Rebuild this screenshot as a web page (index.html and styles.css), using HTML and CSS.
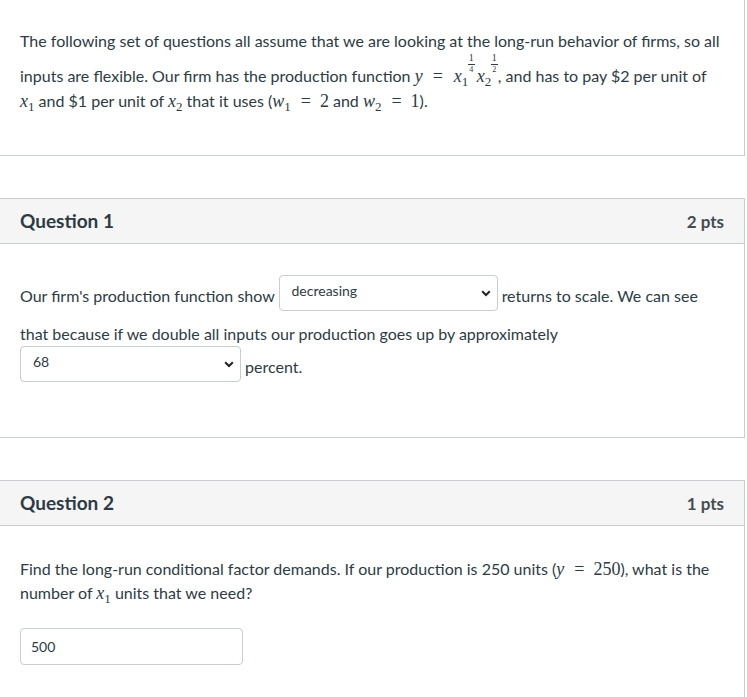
FILE: index.html
```html
<!DOCTYPE html>
<html>
<head>
<meta charset="utf-8">
<link rel="stylesheet" href="styles.css">
</head>
<body>
<div class="card intro">
  <p class="txt">The following set of questions all assume that we are looking at the long-run behavior of firms, so all inputs are flexible. Our firm has the production function <span class="m"><i>y</i><span class="eq">=</span><span class="xv"><i>x</i><span class="ss"><span class="fr"><span class="nu">1</span><span class="de">4</span></span><span class="sb">1</span></span></span><span class="xv"><i>x</i><span class="ss"><span class="fr"><span class="nu">1</span><span class="de">2</span></span><span class="sb">2</span></span></span></span>, and has to pay $2 per unit of <span class="m"><i>x</i><sub>1</sub></span> and $1 per unit of <span class="m"><i>x</i><sub>2</sub></span> that it uses (<span class="m"><i>w</i><sub>1</sub><span class="eq">=</span>2</span> and <span class="m"><i>w</i><sub>2</sub><span class="eq">=</span>1</span>).</p>
</div>

<div class="card q">
  <div class="qhead"><span class="qtitle">Question 1</span><span class="pts">2 pts</span></div>
  <div class="qbody">
    <p class="txt flow">Our firm's production function show <select class="sel sel-a"><option>decreasing</option></select> returns to scale. We can see that because if we double all inputs our production goes up by approximately <select class="sel sel-b"><option>68</option></select> percent.</p>
  </div>
</div>

<div class="card q">
  <div class="qhead"><span class="qtitle">Question 2</span><span class="pts">1 pts</span></div>
  <div class="qbody q2">
    <p class="txt">Find the long-run conditional factor demands. If our production is 250 units (<span class="m"><i>y</i><span class="eq">=</span><span class="num">250</span></span>), what is the number of <span class="m"><i>x</i><sub>1</sub></span> units that we need?</p>
    <input class="ans" type="text" value="500">
  </div>
</div>
</body>
</html>
```

FILE: styles.css
```css
html, body {
  margin: 0;
  padding: 0;
  background: #fff;
}
body {
  font-family: Lato, "Liberation Sans", sans-serif;
  color: #2d3b45;
  font-size: 16px;
}
.card {
  width: 744px;
  margin: -1px 0 0 -1px;
  border: 1px solid #c7cdd1;
  background: #fff;
}
.card + .card {
  margin-top: 42px;
}
.txt {
  margin: 0;
  line-height: 25px;
}
.intro {
  width: 704px;
  padding: 28px 20px 42px 20px;
}
.m {
  font-family: "Liberation Serif", "DejaVu Serif", serif;
  font-size: 18px;
  line-height: 1;
  white-space: nowrap;
}
.m i {
  font-style: italic;
}
.m sub {
  font-size: 13px;
  vertical-align: -4px;
  line-height: 0;
}
.eq {
  margin: 0 9px 0 10px;
}
.xv {
  display: inline-block;
  margin-left: 2px;
}
.ss {
  display: inline-block;
  vertical-align: -4px;
  line-height: 1;
}
.fr {
  display: flex;
  flex-direction: column;
  align-items: center;
  font-size: 10px;
  padding-left: 6px;
  margin-bottom: 1px;
}
.fr .nu {
  border-bottom: 1px solid #2d3b45;
  padding: 0 1px 1px;
}
.fr .de {
  font-size: 8px;
  padding-top: 1px;
}
.sb {
  display: block;
  font-size: 13px;
}
.qhead {
  display: flex;
  justify-content: space-between;
  align-items: center;
  height: 44px;
  padding: 0 20px;
  background: #f5f5f5;
  border-bottom: 1px solid #c7cdd1;
}
.qtitle {
  font-size: 19px;
  font-weight: 700;
  margin-top: -2px;
}
.pts {
  font-size: 17px;
  font-weight: 700;
  color: #444c52;
}
.qbody {
  padding: 31px 20px 45px 20px;
}
.flow {
  line-height: 25px;
}
.sel {
  appearance: none;
  -webkit-appearance: none;
  font-family: Lato, "Liberation Sans", sans-serif;
  font-size: 14px;
  color: #2d3b45;
  height: 36px;
  border: 1px solid #c7cdd1;
  border-radius: 4px;
  background: #fff url("data:image/svg+xml;utf8,<svg xmlns='http://www.w3.org/2000/svg' width='10' height='7' viewBox='0 0 10 7'><path d='M1.2 1.3 L5 5 L8.8 1.3' fill='none' stroke='%23222' stroke-width='2'/></svg>") no-repeat right 6px center;
  padding: 0 24px 5px 12px;
  vertical-align: middle;
  margin: 0 0 10px 0;
}
.sel-a {
  width: 219px;
}
.sel-b {
  width: 221px;
}
.q2 {
  padding: 31px 20px 50px 20px;
}
.q2 .txt {
  line-height: 24px;
}
.ans {
  display: block;
  margin-top: 23px;
  width: 223px;
  height: 37px;
  box-sizing: border-box;
  border: 1px solid #c7cdd1;
  border-radius: 4px;
  padding: 0 10px;
  font-family: Lato, "Liberation Sans", sans-serif;
  font-size: 14px;
  color: #2d3b45;
}
```
